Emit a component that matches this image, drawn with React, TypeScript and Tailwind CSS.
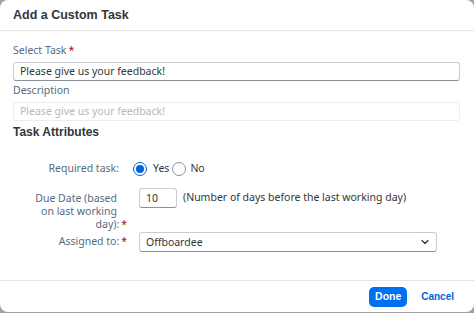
import { ChevronDown } from "lucide-react";

function Req() {
  return <span className="text-[#aa0808] ml-[2px]">*</span>;
}

export default function App() {
  return (
    <div className="w-[474px] h-[313px] bg-[#a3a3a3] font-['Noto_Sans',sans-serif] text-[10.5px] text-[#32363a]">
      <div className="w-full h-[312px] bg-white rounded-[8px] flex flex-col overflow-hidden">
        <div className="h-[31px] px-[13px] flex items-center border-b border-[#e5e5e5]">
          <h1 className="font-['Liberation_Sans',Arial,sans-serif] text-[12.5px] font-bold text-[#32363a] pt-[1px]">
            Add a Custom Task
          </h1>
        </div>

        <div className="flex-1 px-[13px] pt-[11px]">
          <div className="text-[#556b82] leading-[16px]">
            Select Task<Req />
          </div>
          <div className="mt-[4px] mr-[1px] h-[19px] border border-[#c9cdd1] border-b-[#89919a] rounded-[3px] px-[6px] flex items-center leading-none">
            Please give us your feedback!
          </div>
          <div className="mt-[1px] text-[#556b82] leading-[16px]">Description</div>
          <div className="mt-[4px] mr-[1px] h-[19px] border border-[#ececec] rounded-[3px] px-[6px] flex items-center leading-none text-[#b4b8bc]">
            Please give us your feedback!
          </div>
          <div className="mt-[3px] font-['Liberation_Sans',Arial,sans-serif] text-[12px] font-bold leading-[16px]">
            Task Attributes
          </div>

          <div className="mt-[19px] flex items-center h-[20px]">
            <div className="w-[114px] pr-[8px] text-right text-[#556b82]">Required task:</div>
            <div className="ml-[6px] flex items-center">
              <span className="w-[14px] h-[14px] rounded-full border border-[#0064d9] flex items-center justify-center">
                <span className="w-[8px] h-[8px] rounded-full bg-[#0064d9]" />
              </span>
              <span className="ml-[6px]">Yes</span>
              <span className="ml-[3px] w-[14px] h-[14px] rounded-full border border-[#89919a]" />
              <span className="ml-[4px]">No</span>
            </div>
          </div>

          <div className="mt-[9px] flex items-start">
            <div className="w-[114px] pt-[4px] text-right text-[#556b82] leading-[13px]">
              <div className="pr-[10px]">Due Date (based</div>
              <div className="pr-[10px]">on last working</div>
              <div>
                day):<Req />
              </div>
            </div>
            <div className="ml-[12px] flex items-center">
              <div className="w-[38px] h-[20px] border border-[#c9cdd1] border-b-[#89919a] rounded-[3px] px-[6px] flex items-center leading-none">
                10
              </div>
              <span className="ml-[6px]">(Number of days before the last working day)</span>
            </div>
          </div>

          <div className="mt-[1px] flex items-center">
            <div className="w-[114px] text-right text-[#556b82]">
              Assigned to:<Req />
            </div>
            <div className="ml-[12px] w-[298px] h-[20px] border border-[#c9cdd1] border-b-[#89919a] rounded-[3px] pl-[6px] pr-[5px] flex items-center justify-between leading-none">
              <span>Offboardee</span>
              <ChevronDown size={12} strokeWidth={2.5} className="text-[#32363a]" />
            </div>
          </div>
        </div>

        <div className="h-[32px] border-t border-[#e5e5e5] flex items-center justify-end gap-[14px] pr-[20px] font-['Liberation_Sans',Arial,sans-serif]">
          <button className="w-[38px] h-[20px] rounded-[5px] bg-[#0070f2] text-white font-bold text-[10.5px] leading-none">
            Done
          </button>
          <button className="text-[#0064d9] font-bold text-[10px] leading-none">Cancel</button>
        </div>
      </div>
    </div>
  );
}
